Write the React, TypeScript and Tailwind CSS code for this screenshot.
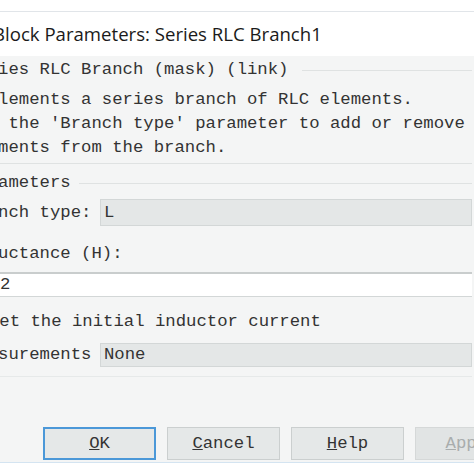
export default function App() {
  const mono = "font-['Liberation_Mono','Courier_New',monospace] text-[17.3px] text-[#333]";

  return (
    <div className="w-[474px] h-[474px] overflow-hidden bg-white">
      {/* title bar */}
      <div className="h-[11px] bg-white" />
      <div className="h-[45px] border-t border-[#e1e5e9] flex items-center">
        <span className="ml-[-7px] font-['Open_Sans','Liberation_Sans',sans-serif] text-[18.6px] text-[#1a1a1a] whitespace-nowrap pb-[1px]">
          Block Parameters: Series RLC Branch1
        </span>
      </div>

      {/* dialog body */}
      <div className="h-[406px] bg-[#f4f5f5] flex flex-col">
        <div className={`ml-[-33px] w-[505px] ${mono} whitespace-pre`}>
          {/* description group */}
          <div className="mt-[3px] flex items-center h-[22px]">
            <span className="leading-[22px]">Series RLC Branch (mask) (link)</span>
            <div className="flex-1 ml-[14px] border-t border-[#dfe2e2]" />
          </div>
          <div className="mt-[7px] leading-[24px]">
            <p>Implements a series branch of RLC elements.</p>
            <p>Use the 'Branch type' parameter to add or remove</p>
            <p>elements from the branch.</p>
          </div>
          <div className="mt-[3px] border-b border-[#dfe2e2]" />

          {/* parameters group */}
          <div className="mt-[8px] flex items-center h-[22px]">
            <span className="leading-[22px]">Parameters</span>
            <div className="flex-1 ml-[8px] border-t border-[#dfe2e2]" />
          </div>
          <div className="mt-[5px] flex items-center h-[27px]">
            <span className="w-[133px] shrink-0">Branch type:</span>
            <div className="flex-1 h-[27px] bg-[#e4e7e7] border border-[#d3d7d7] flex items-center px-[3px]">
              L
            </div>
          </div>
          <div className="mt-[17px] h-[22px] leading-[22px]">Inductance (H):</div>
          <div className="mt-[7px] h-[25px] bg-white border-t-2 border-b border-t-[#c9cdcd] border-b-[#d3d7d7] flex items-center px-[1px] leading-none">
            <span className="ml-[32px]">2</span>
          </div>
          <div className="mt-[14px] h-[22px] flex items-center">
            <div className="w-[13px] h-[13px] border border-[#777] bg-white mr-[9px]" />
            <span className="leading-[22px]">Set the initial inductor current</span>
          </div>
          <div className="mt-[10px] flex items-center h-[24px]">
            <span className="w-[133px] shrink-0">Measurements</span>
            <div className="flex-1 h-[24px] bg-[#e4e7e7] border border-[#d3d7d7] flex items-center px-[3px]">
              None
            </div>
          </div>
          <div className="mt-[9px] border-b border-[#e6e9e9]" />
        </div>

        {/* buttons */}
        <div className={`mt-auto mb-[2px] flex gap-[11px] pl-[43px] ${mono}`}>
          <button className="w-[113px] h-[33px] shrink-0 bg-[#e5e8e8] border-2 border-[#4b98d8] flex items-center justify-center">
            <span><u>O</u>K</span>
          </button>
          <button className="w-[113px] h-[33px] shrink-0 bg-[#e5e8e8] border border-[#cbcfcf] flex items-center justify-center">
            <span><u>C</u>ancel</span>
          </button>
          <button className="w-[113px] h-[33px] shrink-0 bg-[#e5e8e8] border border-[#cbcfcf] flex items-center justify-center">
            <span><u>H</u>elp</span>
          </button>
          <button className="w-[113px] h-[33px] shrink-0 bg-[#e1e4e4] border border-[#d5d8d8] flex items-center justify-center text-[#a9adad]">
            <span><u>A</u>pply</span>
          </button>
        </div>
      </div>
      <div className="h-[12px] border-t border-[#d4e4f1] bg-white" />
    </div>
  );
}
